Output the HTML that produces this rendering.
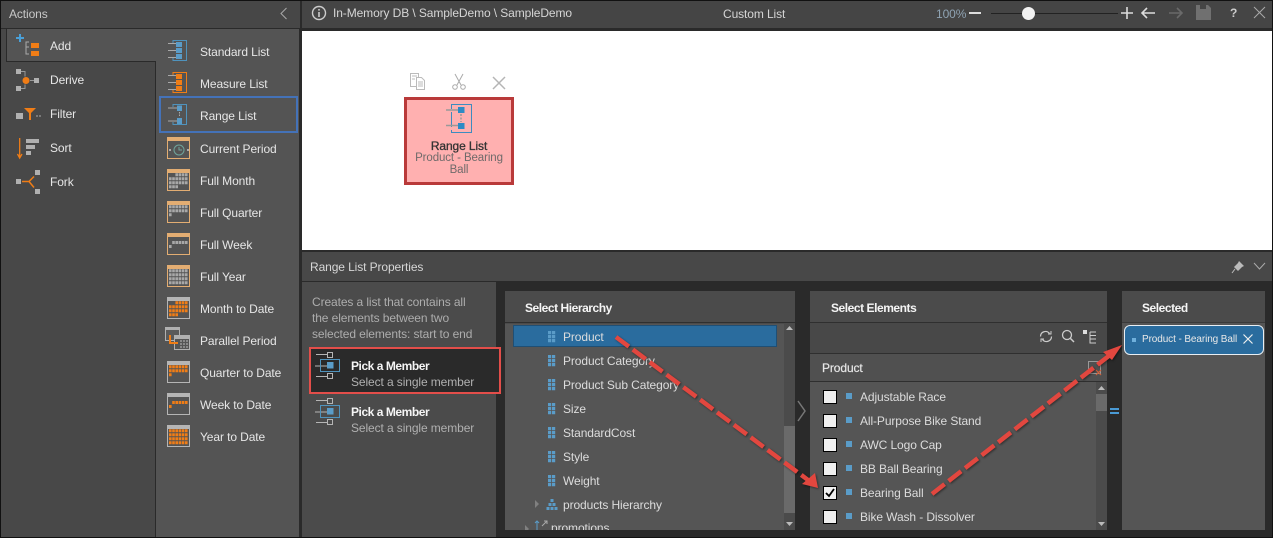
<!DOCTYPE html>
<html><head><meta charset="utf-8">
<style>
html,body{margin:0;padding:0;background:#262626}
#p{position:relative;width:1273px;height:538px;overflow:hidden;background:#2a2a2a;font-family:"Liberation Sans",sans-serif;font-size:12px;color:#e6e6e6}
#p div,#p svg,#p span{position:absolute}
.t{white-space:nowrap;line-height:16px;letter-spacing:-.1px}
.t.b{font-weight:bold;color:#f5f5f5;letter-spacing:-.45px}
.g{color:#b0b0b0}
.d{color:#dcdcdc}
.cb{left:823px;width:12px;height:12px;background:#f0f0f0;border:1px solid #000}
.sq{left:846px;width:6px;height:6px;background:#5a9cc8}
</style></head><body>
<div id="p">
<svg width="0" height="0" style="position:absolute">
<defs>
<g id="list"><path d="M6 3V.5H19.500V20.500H6V18" fill="none" stroke-width="1"/><path d="M1 3.500H9M1 10.500H9M1 17.500H9" stroke="#a8a8a8" fill="none"/></g>
<g id="gridi"><path d="M1 1h3.200v3.200H1zM5 1h3.200v3.200H5zM1 5h3.200v3.200H1zM5 5h3.200v3.200H5zM1 9h3.200v3.200H1zM5 9h3.200v3.200H5z" fill="#5a9cc8"/></g>
<g id="cal"><rect x=".5" y=".5" width="22" height="21" fill="none" stroke="#e3ad72"/><rect x="0" y="0" width="23" height="4" fill="#e3ad72"/></g>
<g id="calg"><rect x=".5" y=".5" width="22" height="21" fill="none" stroke="#b5b5b5"/><rect x="0" y="0" width="23" height="4" fill="#b5b5b5"/></g>
<g id="pick"><path d="M2 3.500H13M1 15H13M2 25.500H13" stroke="#b5b5b5" fill="none"/><rect x="13.500" y="1.500" width="5" height="5" fill="none" stroke="#b5b5b5"/><rect x="13.500" y="22.500" width="5" height="5" fill="none" stroke="#b5b5b5"/><rect x="6.500" y="8.500" width="19" height="12" fill="none" stroke="#4f93bd"/><rect x="13" y="11" width="6.500" height="6.500" fill="#5a9cc8"/></g>
</defs>
</svg>

<!-- left panel -->
<div style="left:1px;top:1px;width:299px;height:27px;background:#474747"></div>
<div style="left:1px;top:28px;width:299px;height:1px;background:#2a2a2a"></div>
<div style="left:1px;top:29px;width:155px;height:508px;background:#484848"></div>
<div style="left:156px;top:29px;width:143px;height:508px;background:#545454"></div>
<div style="left:155px;top:61px;width:1px;height:476px;background:#2a2a2a"></div>
<div style="left:6px;top:29px;width:150px;height:32px;background:#545454"></div>
<div style="left:6px;top:29px;width:1px;height:33px;background:#2a2a2a"></div>
<div style="left:6px;top:61px;width:150px;height:1px;background:#2a2a2a"></div>
<div class="t" style="left:9px;top:6px;color:#c8c8c8">Actions</div>
<svg style="left:278px;top:6px" width="12" height="16"><path d="M8.500 2L3 7.500L8.500 13" fill="none" stroke="#aaa"/></svg>

<svg style="left:14px;top:33px" width="28" height="24"><path d="M6 1v8M2 5h8" stroke="#4aa0d8" stroke-width="2"/><path d="M15 9h-3v12h3M12 14h3" stroke="#aaa" fill="none"/><rect x="17" y="10" width="8" height="5" fill="#f07d16"/><rect x="17" y="18" width="8" height="5" fill="#f07d16"/></svg>
<div class="t" style="left:50px;top:38px">Add</div>
<svg style="left:14px;top:68px" width="28" height="24"><rect x="2" y="1" width="5" height="5" fill="#b0b0b0"/><rect x="2" y="18" width="5" height="5" fill="#b0b0b0"/><rect x="20" y="10" width="5" height="5" fill="#b0b0b0"/><circle cx="12" cy="12.500" r="3.500" fill="#f07d16"/><path d="M7 3.500h4v5M7 20.500h4v-4M16 12.500h4" stroke="#999" fill="none"/></svg>
<div class="t" style="left:50px;top:72px">Derive</div>
<svg style="left:14px;top:102px" width="28" height="24"><rect x="2" y="11" width="7" height="6" fill="#b0b0b0"/><path d="M10 6h12l-5 5v7h-2v-7z" fill="#f07d16"/><path d="M22 14h2M25 14h2" stroke="#aaa"/></svg>
<div class="t" style="left:50px;top:106px">Filter</div>
<svg style="left:14px;top:136px" width="28" height="24"><path d="M5.700 2V21M3.500 18l2.200 4L8 18" stroke="#f07d16" fill="none" stroke-width="1.300"/><rect x="12" y="3" width="13" height="4" fill="#b0b0b0"/><rect x="12" y="9" width="9" height="4" fill="#b0b0b0"/><rect x="12" y="15" width="5" height="4" fill="#b0b0b0"/></svg>
<div class="t" style="left:50px;top:140px">Sort</div>
<svg style="left:14px;top:170px" width="28" height="24"><rect x="2" y="9" width="5" height="5" fill="#b0b0b0"/><rect x="21" y="0" width="5" height="5" fill="#b0b0b0"/><rect x="21" y="19" width="5" height="5" fill="#b0b0b0"/><path d="M8 11.500h7l5-5M15 11.500l5 6" stroke="#f07d16" stroke-width="1.500" fill="none"/></svg>
<div class="t" style="left:50px;top:174px">Fork</div>

<!-- list types -->
<svg style="left:167px;top:40px" width="28" height="24"><use href="#list" stroke="#4f93bd"/><path d="M9 2h6v5H9zM9 8h6v5H9zM9 14h6v5H9z" fill="#5a9cc8"/></svg>
<div class="t" style="left:200px;top:44px">Standard List</div>
<svg style="left:167px;top:72px" width="28" height="24"><use href="#list" stroke="#f07d16"/><path d="M9 2h6v5H9zM9 8h6v5H9zM9 14h6v5H9z" fill="#f07d16"/></svg>
<div class="t" style="left:200px;top:76px">Measure List</div>
<div style="left:159px;top:96px;width:135px;height:33px;border:2px solid #4472b8;background:#545454"></div>
<svg style="left:167px;top:104px" width="28" height="24"><path d="M6 3V.5H19.500V20.500H6V18" fill="none" stroke="#4f93bd"/><path d="M1 4H10M1 17H10" stroke="#a8a8a8"/><rect x="10" y="1.500" width="5" height="5.500" fill="#5a9cc8"/><rect x="10" y="14" width="5" height="6" fill="#5a9cc8"/><path d="M12.500 8v5" stroke="#aaa" stroke-dasharray="1.500 1"/></svg>
<div class="t" style="left:200px;top:108px">Range List</div>

<svg style="left:167px;top:137px" width="24" height="23"><use href="#cal"/><circle cx="12" cy="13" r="5" fill="none" stroke="#6fa59c"/><path d="M12 10v3h3" stroke="#6fa59c" fill="none"/><path d="M2 13h2M20 13h2" stroke="#aaa" stroke-width="2"/></svg>
<div class="t" style="left:200px;top:141px">Current Period</div>
<svg style="left:167px;top:169px" width="24" height="23"><use href="#cal"/><path d="M8.400 5.700H21M2 9.700H21M2 13.700H21M2 17.700H11.600" stroke="#a8a8a8" stroke-width="3" stroke-dasharray="2.600 .6" fill="none"/></svg>
<div class="t" style="left:200px;top:173px">Full Month</div>
<svg style="left:167px;top:201px" width="24" height="23"><use href="#cal"/><path d="M2 5.700H21M2 9.700H21M2 13.700H5" stroke="#a8a8a8" stroke-width="3" stroke-dasharray="2.600 .6" fill="none"/></svg>
<div class="t" style="left:200px;top:205px">Full Quarter</div>
<svg style="left:167px;top:233px" width="24" height="23"><use href="#cal"/><path d="M5.200 9.500H21M2 13.500H5" stroke="#a8a8a8" stroke-width="3" stroke-dasharray="2.600 .6" fill="none"/></svg>
<div class="t" style="left:200px;top:237px">Full Week</div>
<svg style="left:167px;top:265px" width="24" height="23"><use href="#cal"/><path d="M2 5.700H21M2 9.700H21M2 13.700H21M2 17.700H21" stroke="#a8a8a8" stroke-width="3" stroke-dasharray="2.600 .6" fill="none"/></svg>
<div class="t" style="left:200px;top:269px">Full Year</div>
<svg style="left:167px;top:297px" width="24" height="23"><use href="#calg"/><path d="M8.400 5.700H21M2 9.700H21M2 13.700H21M2 17.700H11.600" stroke="#f07d16" stroke-width="3" stroke-dasharray="2.600 .6" fill="none"/></svg>
<div class="t" style="left:200px;top:301px">Month to Date</div>
<svg style="left:165px;top:327px" width="27" height="26"><rect x=".5" y=".5" width="14" height="13" fill="#5a5a5a" stroke="#b0b0b0"/><rect x="0" y="0" width="15" height="3" fill="#b0b0b0"/><rect x="9.500" y="8.500" width="15" height="14" fill="#555" stroke="#b0b0b0"/><rect x="9" y="8" width="16" height="4" fill="#b0b0b0"/><path d="M15 14h8M15 17h8M15 20h8" stroke="#888" stroke-width="2" stroke-dasharray="2 1"/><path d="M5 8v8h8" fill="none" stroke="#f07d16" stroke-width="2"/></svg>
<div class="t" style="left:200px;top:333px">Parallel Period</div>
<svg style="left:167px;top:361px" width="24" height="23"><use href="#calg"/><path d="M2 5.700H21M2 9.700H21M2 13.700H5" stroke="#f07d16" stroke-width="3" stroke-dasharray="2.600 .6" fill="none"/></svg>
<div class="t" style="left:200px;top:365px">Quarter to Date</div>
<svg style="left:167px;top:393px" width="24" height="23"><use href="#calg"/><path d="M5.200 9.500H21M2 13.500H5" stroke="#f07d16" stroke-width="3" stroke-dasharray="2.600 .6" fill="none"/></svg>
<div class="t" style="left:200px;top:397px">Week to Date</div>
<svg style="left:167px;top:425px" width="24" height="23"><use href="#calg"/><path d="M2 5.700H21M2 9.700H21M2 13.700H21M2 17.700H21" stroke="#f07d16" stroke-width="3" stroke-dasharray="2.600 .6" fill="none"/></svg>
<div class="t" style="left:200px;top:429px">Year to Date</div>

<!-- top bar -->
<div style="left:302px;top:1px;width:970px;height:27px;background:#454545"></div>
<svg style="left:311px;top:5px" width="18" height="16"><circle cx="8" cy="8" r="6.500" fill="none" stroke="#ccc" stroke-width="1.400"/><path d="M8 7v5" stroke="#ccc" stroke-width="1.600"/><path d="M8 4v1.600" stroke="#ccc" stroke-width="1.600"/></svg>
<div class="t" style="left:333px;top:5px;color:#d6d6d6">In-Memory DB \ SampleDemo \ SampleDemo</div>
<div class="t" style="left:723px;top:6px;color:#d6d6d6">Custom List</div>
<div class="t" style="left:936px;top:6px;color:#8fa3b3">100%</div>
<div style="left:969px;top:12px;width:12px;height:2px;background:#ddd"></div>
<div style="left:991px;top:13px;width:127px;height:1px;background:#222"></div>
<div style="left:1022px;top:7px;width:13px;height:13px;border-radius:50%;background:#f2f2f2"></div>
<svg style="left:1120px;top:5px" width="16" height="16"><path d="M1 8h12M7 2v12" stroke="#ddd" stroke-width="1.600"/></svg>
<svg style="left:1139px;top:5px" width="18" height="16"><path d="M16 8H3M8 3L3 8l5 5" stroke="#ddd" stroke-width="1.600" fill="none"/></svg>
<svg style="left:1167px;top:5px" width="18" height="16"><path d="M2 8h13M10 3l5 5-5 5" stroke="#6a6a6a" stroke-width="1.600" fill="none"/></svg>
<svg style="left:1195px;top:4px" width="18" height="18"><path d="M1 1h12l3 3v12H1z" fill="#707070"/><rect x="5" y="1" width="6" height="4" fill="#454545"/></svg>
<div class="t b" style="left:1230px;top:5px;color:#ccc">?</div>
<svg style="left:1253px;top:5px" width="14" height="16"><path d="M1 2l11 11M12 2L1 13" stroke="#aaa"/></svg>

<!-- canvas -->
<div style="left:302px;top:31px;width:970px;height:219px;background:#fff"></div>
<svg style="left:409px;top:72px" width="20" height="20"><path d="M1.500 1.500h8v13h-8z" fill="#fff" stroke="#bbb"/><path d="M7.500 5.500h5l3 3v9h-8z" fill="#fff" stroke="#bbb"/><path d="M3 4h5M3 7h3M9 10h5M9 12h5M9 14h5" stroke="#bbb"/></svg>
<svg style="left:451px;top:73px" width="16" height="17"><path d="M4 1l6 11M12 1L6 12" stroke="#aaa"/><circle cx="4" cy="14" r="2.300" fill="none" stroke="#aaa"/><circle cx="12" cy="14" r="2.300" fill="none" stroke="#aaa"/></svg>
<svg style="left:492px;top:76px" width="15" height="15"><path d="M1 1l12 12M13 1L1 13" stroke="#b5b5b5" stroke-width="1.500"/></svg>
<div style="left:404px;top:97px;width:104px;height:82px;background:#ffb0b0;border:3px solid #b93a3a"></div>
<svg style="left:445px;top:103px" width="28" height="30"><path d="M6.500 6V1.500H26.500V29.500H6.500V27" fill="none" stroke="#3d8cc0"/><path d="M6.500 9V24" fill="none" stroke="#3d8cc0"/><path d="M1 7H13M1 22.500H13" stroke="#999" stroke-width="1.500"/><rect x="13" y="4" width="6.500" height="6" fill="#2e8bc5"/><rect x="13" y="20" width="6.500" height="6" fill="#2e8bc5"/><path d="M16 11v8" stroke="#999" stroke-dasharray="2 1.500" stroke-width="1.500"/></svg>
<div class="t" style="left:404px;top:138px;width:110px;text-align:center;color:#333;-webkit-text-stroke:.3px #333">Range List</div>
<div class="t" style="left:404px;top:152px;width:110px;text-align:center;color:#6f6a6a;line-height:12px;font-size:11.500px">Product - Bearing<br>Ball</div>

<!-- properties -->
<div style="left:302px;top:252px;width:970px;height:29px;background:#484848"></div>
<div style="left:302px;top:281px;width:970px;height:1px;background:#2a2a2a"></div>
<div class="t" style="left:310px;top:259px;color:#d6d6d6">Range List Properties</div>
<svg style="left:1231px;top:260px" width="14" height="14"><path d="M8 1l5 5-2 1-3 3-1 1-4-4 1-1 3-3z" fill="#bbb"/><path d="M4 9L1 13" stroke="#bbb"/></svg>
<svg style="left:1253px;top:261px" width="14" height="12"><path d="M1 2l5.500 6L12 2" fill="none" stroke="#aaa"/></svg>

<div style="left:302px;top:282px;width:194px;height:255px;background:#4b4b4b"></div>
<div class="t g" style="left:312px;top:294px;line-height:16px;color:#adadad">Creates a list that contains all<br>the elements between two<br>selected elements: start to end</div>
<div style="left:309px;top:347px;width:188px;height:43px;background:#2a2a2a;border:2px solid #e34e4a"></div>
<svg style="left:314px;top:351px" width="28" height="29"><use href="#pick"/></svg>
<div class="t b" style="left:351px;top:358px">Pick a Member</div>
<div class="t g" style="left:351px;top:374px">Select a single member</div>
<svg style="left:314px;top:397px" width="28" height="29"><use href="#pick"/></svg>
<div class="t b" style="left:351px;top:404px">Pick a Member</div>
<div class="t g" style="left:351px;top:420px">Select a single member</div>

<!-- select hierarchy -->
<div style="left:505px;top:291px;width:290px;height:239px;background:#555"></div>
<div style="left:505px;top:291px;width:290px;height:33px;background:#4b4b4b"></div>
<div style="left:505px;top:322px;width:290px;height:1px;background:#2f2f2f"></div>
<div class="t b" style="left:525px;top:300px">Select Hierarchy</div>
<div style="left:513px;top:325px;width:262px;height:20px;background:#2a6c9e;border:1px solid #1f4f75"></div>
<svg style="left:547px;top:330px" width="10" height="14"><use href="#gridi"/></svg>
<div class="t d" style="left:563px;top:329px">Product</div>
<svg style="left:547px;top:354px" width="10" height="14"><use href="#gridi"/></svg>
<div class="t d" style="left:563px;top:353px">Product Category</div>
<svg style="left:547px;top:378px" width="10" height="14"><use href="#gridi"/></svg>
<div class="t d" style="left:563px;top:377px">Product Sub Category</div>
<svg style="left:547px;top:402px" width="10" height="14"><use href="#gridi"/></svg>
<div class="t d" style="left:563px;top:401px">Size</div>
<svg style="left:547px;top:426px" width="10" height="14"><use href="#gridi"/></svg>
<div class="t d" style="left:563px;top:425px">StandardCost</div>
<svg style="left:547px;top:450px" width="10" height="14"><use href="#gridi"/></svg>
<div class="t d" style="left:563px;top:449px">Style</div>
<svg style="left:547px;top:474px" width="10" height="14"><use href="#gridi"/></svg>
<div class="t d" style="left:563px;top:473px">Weight</div>
<svg style="left:533px;top:499px" width="8" height="10"><path d="M2 1l4 4-4 4z" fill="#808080"/></svg>
<svg style="left:546px;top:498px" width="13" height="13"><path d="M4.500 1h3v3h-3zM2.500 5h3v3h-3zM6.500 5h3v3h-3zM.5 9h3v3h-3zM4.500 9h3v3h-3zM8.500 9h3v3h-3z" fill="#5a9cc8"/></svg>
<div class="t d" style="left:563px;top:497px">products Hierarchy</div>
<div style="left:505px;top:520px;width:280px;height:10px;overflow:hidden">
<svg style="left:18px;top:4px" width="8" height="10"><path d="M2 1l4 4-4 4z" fill="#808080"/></svg>
<svg style="left:29px;top:0" width="16" height="12"><path d="M3 1v10M1 3l2-2 2 2" stroke="#5a9cc8" fill="none"/><path d="M8 6l5-5M10 1h3v3" stroke="#aaa" fill="none"/></svg>
<div class="t d" style="left:46px;top:0">promotions</div>
</div>
<div style="left:784px;top:323px;width:11px;height:207px;background:#4b4b4b"></div>
<div style="left:784px;top:426px;width:11px;height:87px;background:#6a6a6a"></div>
<svg style="left:784px;top:325px" width="11" height="6"><path d="M5.500 1l3.500 4H2z" fill="#bbb"/></svg>
<svg style="left:784px;top:521px" width="11" height="6"><path d="M2 1h7L5.500 5z" fill="#bbb"/></svg>
<svg style="left:796px;top:399px" width="12" height="24"><path d="M2 2l7 10-7 10" fill="none" stroke="#777" stroke-width="1.500"/></svg>

<!-- select elements -->
<div style="left:810px;top:291px;width:297px;height:239px;background:#555"></div>
<div style="left:810px;top:291px;width:297px;height:32px;background:#4b4b4b"></div>
<div style="left:810px;top:322px;width:297px;height:1px;background:#2f2f2f"></div>
<div style="left:810px;top:323px;width:297px;height:30px;background:#484848"></div>
<div style="left:810px;top:353px;width:297px;height:1px;background:#2f2f2f"></div>
<div style="left:810px;top:354px;width:297px;height:27px;background:#505050"></div>
<div style="left:810px;top:381px;width:297px;height:1px;background:#2f2f2f"></div>
<div class="t b" style="left:831px;top:300px">Select Elements</div>
<svg style="left:1039px;top:330px" width="14" height="13"><path d="M1.500 6.500a5 5 0 0 1 9-3M12.500 6.500a5 5 0 0 1-9 3" fill="none" stroke="#ccc" stroke-width="1.200"/><path d="M9 4h3V1M5 9H2v3" stroke="#ccc" fill="none"/></svg>
<svg style="left:1061px;top:329px" width="14" height="14"><circle cx="6" cy="6" r="4.500" fill="none" stroke="#ccc" stroke-width="1.300"/><path d="M9.500 9.500l3.500 3.500" stroke="#ccc" stroke-width="1.500"/></svg>
<svg style="left:1082px;top:329px" width="16" height="15"><rect x="1" y="1" width="4" height="4" fill="#ddd"/><path d="M8 3v11h6M8 3h6M8 6.500h6M8 10h6" stroke="#ccc" fill="none"/></svg>
<div class="t" style="left:822px;top:360px;color:#e6e6e6;-webkit-text-stroke:.2px #e6e6e6">Product</div>
<svg style="left:1087px;top:360px" width="16" height="16"><rect x="1.500" y="1.500" width="12" height="12" fill="none" stroke="#999"/><path d="M9 10l5 5M14 10l-5 5" stroke="#d0603a" stroke-width="1.200"/></svg>

<div class="cb" style="top:390px"></div><div class="sq" style="top:393px"></div><div class="t d" style="left:860px;top:389px">Adjustable Race</div>
<div class="cb" style="top:414px"></div><div class="sq" style="top:417px"></div><div class="t d" style="left:860px;top:413px">All-Purpose Bike Stand</div>
<div class="cb" style="top:438px"></div><div class="sq" style="top:441px"></div><div class="t d" style="left:860px;top:437px">AWC Logo Cap</div>
<div class="cb" style="top:462px"></div><div class="sq" style="top:465px"></div><div class="t d" style="left:860px;top:461px">BB Ball Bearing</div>
<div class="cb" style="top:486px"></div><div class="sq" style="top:489px"></div><div class="t d" style="left:860px;top:485px">Bearing Ball</div>
<svg style="left:824px;top:487px" width="12" height="12"><path d="M2 6l3 3 5-7" fill="none" stroke="#000" stroke-width="1.800"/></svg>
<div class="cb" style="top:510px"></div><div class="sq" style="top:513px"></div><div class="t d" style="left:860px;top:509px">Bike Wash - Dissolver</div>

<div style="left:1096px;top:382px;width:11px;height:148px;background:#4b4b4b"></div>
<div style="left:1096px;top:394px;width:11px;height:17px;background:#6a6a6a"></div>
<svg style="left:1096px;top:385px" width="11" height="6"><path d="M5.500 1l3.500 4H2z" fill="#bbb"/></svg>
<svg style="left:1096px;top:521px" width="11" height="6"><path d="M2 1h7L5.500 5z" fill="#bbb"/></svg>
<div style="left:1110px;top:408px;width:9px;height:2px;background:#4a9ad4"></div>
<div style="left:1110px;top:412px;width:9px;height:2px;background:#4a9ad4"></div>

<!-- selected -->
<div style="left:1122px;top:291px;width:143px;height:239px;background:#555"></div>
<div style="left:1122px;top:291px;width:143px;height:31px;background:#4b4b4b"></div>
<div style="left:1122px;top:322px;width:143px;height:1px;background:#3a3a3a"></div>
<div class="t b" style="left:1142px;top:300px">Selected</div>
<div style="left:1124px;top:325px;width:138px;height:28px;background:#2a6c9e;border:1px solid #e8eef3;border-radius:6px"></div>
<div style="left:1132px;top:338px;width:4px;height:4px;background:#6fb0dc"></div>
<div class="t" style="left:1142px;top:332px;font-size:10px;color:#e8e8e8">Product - Bearing Ball</div>
<svg style="left:1242px;top:333px" width="12" height="12"><path d="M1.500 1.500l9 9M10.500 1.500l-9 9" stroke="#eee" stroke-width="1.200"/></svg>

<!-- red arrows -->
<svg style="left:0;top:0;filter:drop-shadow(1px 1px 1px rgba(0,0,0,.45))" width="1273" height="538">
<path d="M616 337L808 480" stroke="#e2473f" stroke-width="4.500" stroke-dasharray="16 5" fill="none"/>
<path d="M818 488L802 484L815 473z" fill="#e2473f"/>
<path d="M932 494L1110 355" stroke="#e2473f" stroke-width="4.500" stroke-dasharray="16 5" fill="none"/>
<path d="M1122 345L1112 360L1103 352z" fill="#e2473f"/>
</svg>
<div style="left:0;top:0;width:1271px;height:536px;border:1px solid #111;pointer-events:none"></div>
</div>
</body></html>
